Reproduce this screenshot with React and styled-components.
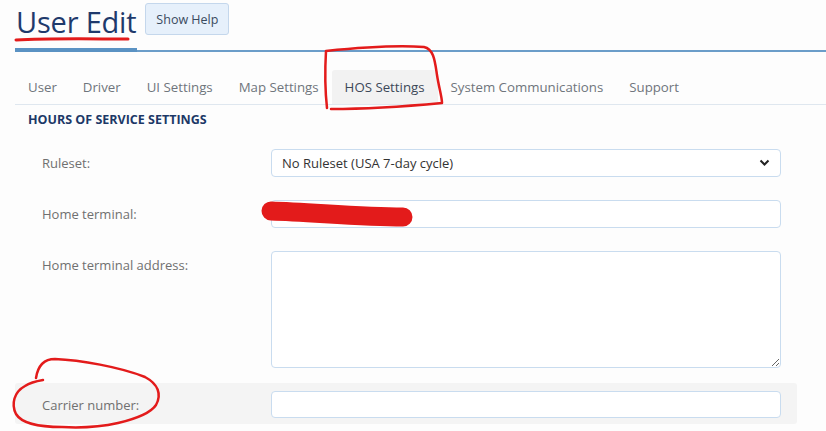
import styled, { createGlobalStyle } from "styled-components";

const GlobalStyle = createGlobalStyle`
  body {
    margin: 0;
    background: #fdfdfd;
    font-family: "Open Sans", "Noto Sans", sans-serif;
  }
`;

const Page = styled.div`
  position: relative;
  width: 826px;
  height: 431px;
  overflow: hidden;
  background: #fdfdfd;
`;

const Header = styled.div`
  display: flex;
  align-items: flex-start;
  margin-left: 15px;
  padding-top: 2px;
  border-bottom: 2px solid #6b9dc9;
`;

const Title = styled.h1`
  margin: 0 8px -2px 0;
  padding: 0 1px 6px 1px;
  font-size: 29px;
  line-height: 40px;
  font-weight: 400;
  color: #1f3a6c;
  border-bottom: 4px solid #5a92c3;
  letter-spacing: -0.2px;
`;

const HelpButton = styled.button`
  margin-top: 1px;
  height: 32px;
  padding: 0 10px;
  font-family: inherit;
  font-size: 12.5px;
  color: #3a4a5e;
  background: #e6f0fb;
  border: 1px solid #c4d7ec;
  border-radius: 3px;
`;

const Tabs = styled.div`
  display: flex;
  margin: 18px 0 0 15px;
  border-bottom: 1px solid #dfe7ef;
`;

const Tab = styled.div`
  padding: 0 13px;
  height: 34px;
  line-height: 34px;
  font-size: 13.25px;
  color: ${p => (p.active ? "#3c4858" : "#6f757c")};
  background: ${p => (p.active ? "#f2f2f2" : "transparent")};
  border-radius: 3px 3px 0 0;
`;

const Section = styled.h2`
  margin: 6px 0 12px 28px;
  font-size: 12.5px;
  line-height: 18px;
  font-weight: 700;
  color: #1c3867;
`;

const Form = styled.div`
  margin-left: 15px;
  width: 782px;
`;

const Row = styled.div`
  display: flex;
  padding: 8px 16px ${p => (p.shaded ? 6 : 8)}px 27px;
  margin-bottom: 7px;
  background: ${p => (p.shaded ? "#f4f4f4" : "transparent")};
  border-radius: 3px;
`;

const Label = styled.label`
  width: 229px;
  flex: none;
  padding-top: 5px;
  font-size: 13px;
  line-height: 18px;
  color: #707070;
`;

const fieldBase = `
  box-sizing: border-box;
  width: 510px;
  border: 1px solid #c9dcef;
  border-radius: 4px;
  background: #ffffff;
  font-family: inherit;
  font-size: 13px;
  color: #333333;
  outline: none;
`;

const Select = styled.div`
  ${fieldBase}
  height: 28px;
  display: flex;
  align-items: center;
  justify-content: space-between;
  padding: 0 10px;
`;

const Input = styled.input`
  ${fieldBase}
  display: block;
  height: ${p => p.h || 28}px;
`;

const TextArea = styled.textarea`
  ${fieldBase}
  height: 117px;
  resize: vertical;
  display: block;
`;

const Marks = styled.svg`
  position: absolute;
  left: 0;
  top: 0;
  pointer-events: none;
`;

const tabs = ["User", "Driver", "UI Settings", "Map Settings", "HOS Settings", "System Communications", "Support"];

export default function App() {
  return (
    <Page>
      <GlobalStyle />
      <Header>
        <Title>User Edit</Title>
        <HelpButton>Show Help</HelpButton>
      </Header>
      <Tabs>
        {tabs.map(t => (
          <Tab key={t} active={t === "HOS Settings"}>{t}</Tab>
        ))}
      </Tabs>
      <Section>HOURS OF SERVICE SETTINGS</Section>
      <Form>
        <Row>
          <Label>Ruleset:</Label>
          <Select>
            <span>No Ruleset (USA 7-day cycle)</span>
            <svg width="11" height="8" viewBox="0 0 11 8">
              <path d="M1.5 1.5 L5.5 5.5 L9.5 1.5" fill="none" stroke="#222" strokeWidth="2" />
            </svg>
          </Select>
        </Row>
        <Row>
          <Label>Home terminal:</Label>
          <Input />
        </Row>
        <Row>
          <Label>Home terminal address:</Label>
          <TextArea />
        </Row>
        <Row shaded>
          <Label>Carrier number:</Label>
          <Input h={27} />
        </Row>
      </Form>
      <Marks width="826" height="431" viewBox="0 0 826 431">
        <g fill="none" stroke="#e31b1b" strokeLinecap="round" strokeLinejoin="round">
          <path d="M16 40 C50 38 95 39 128 39" strokeWidth="3" />
          <path d="M327 108 C325 90 325 68 326 51 C355 48 395 45 424 47 C434 49 435 62 437 75 C439 88 442 97 442 103 C410 106 365 109 331 109" strokeWidth="2.5" />
          <path d="M271 211 C310 212 360 217 403 217" strokeWidth="19" />
          <path d="M36 378 C38 365 45 359 55 359 C80 360 120 367 145 377 C158 384 162 394 156 405 C150 414 135 419 118 423 C100 427 80 428 62 427 C40 427 22 424 16 414 C11 404 14 392 25 386 C31 382 37 381 43 380" strokeWidth="2.5" />
        </g>
      </Marks>
    </Page>
  );
}
